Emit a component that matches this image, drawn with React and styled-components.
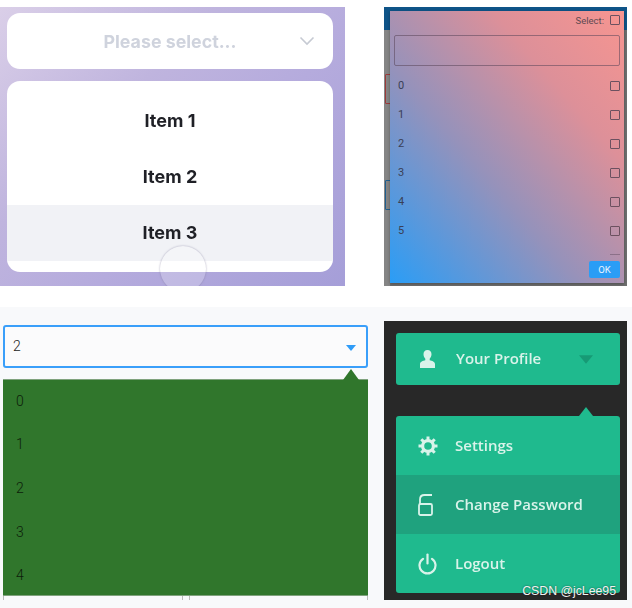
import React from 'react'
import styled, { createGlobalStyle } from 'styled-components'

const GlobalStyle = createGlobalStyle`
  html, body {
    margin: 0;
    padding: 0;
    background: #fff;
  }
  body {
    width: 632px;
    height: 608px;
    overflow: hidden;
    font-family: Inter, 'Liberation Sans', sans-serif;
  }
`

const Row = styled.div`
  display: grid;
  grid-template-columns: 345px 243px;
  column-gap: 39px;
  height: ${(p) => p.$height}px;
  padding-top: ${(p) => p.$top}px;
  box-sizing: border-box;
  background: ${(p) => p.$bg};
`

/* top left */
const Lavender = styled.section`
  height: 279px;
  overflow: hidden;
  position: relative;
  box-sizing: border-box;
  padding: 6px 12px 0 7px;
  background: linear-gradient(135deg, #dacfe8 0%, #bfb4de 35%, #b5abdd 60%, #a59ed8 100%);
`

const SoftSelect = styled.div`
  height: 56px;
  display: flex;
  align-items: center;
  justify-content: center;
  position: relative;
  border-radius: 13px;
  background: #fff;
  color: #cfd3dd;
  font-size: 17.8px;
  font-weight: 700;
  padding-top: 1px;
  box-sizing: border-box;
  filter: blur(0.4px);
  svg {
    position: absolute;
    right: 18px;
    top: 23px;
  }
`

const SoftList = styled.ul`
  list-style: none;
  margin: 12px 0 0;
  padding: 12px 0 11px;
  border-radius: 13px;
  background: #fff;
`

const SoftItem = styled.li`
  height: 56px;
  box-sizing: border-box;
  padding-bottom: 2px;
  display: flex;
  align-items: center;
  justify-content: center;
  color: #1f2026;
  font-size: 18px;
  font-weight: 700;
  background: ${(p) => (p.$active ? '#f1f2f6' : 'transparent')};
  span {
    filter: blur(0.4px);
  }
`

const Touch = styled.div`
  position: absolute;
  left: 160px;
  top: 239px;
  width: 46px;
  height: 46px;
  border-radius: 50%;
  background: rgba(255, 255, 255, 0.22);
  box-shadow: 0 0 2px rgba(120, 115, 150, 0.65);
`

/* top right */
const Backdrop = styled.section`
  height: 279px;
  position: relative;
  overflow: hidden;
  background: linear-gradient(to right, #858585 6px, #6e6e6e 6px);
  &::before {
    content: '';
    display: block;
    height: 23px;
    background: #0e5488;
  }
`

// pieces of the page showing through on the left of the dialog
const BehindBox = styled.div`
  position: absolute;
  left: 1px;
  top: ${(p) => p.$top}px;
  width: 12px;
  height: 28px;
  border: 1px solid ${(p) => p.$color};
  border-radius: 1px;
`

const Dialog = styled.div`
  position: absolute;
  left: 6px;
  top: 4px;
  width: 234px;
  height: 272px;
  box-sizing: border-box;
  padding: 0 4px 0 4px;
  overflow: hidden;
  color: #3a3f55;
  font-family: Roboto, 'Liberation Sans', sans-serif;
  background: linear-gradient(to top right, #2a9df6 0%, #9592bb 40%, #dd9099 72%, #f79590 100%);
  box-shadow: 0 1px 3px rgba(0, 0, 0, 0.3);
`

const DialogHead = styled.div`
  height: 18px;
  display: flex;
  align-items: center;
  justify-content: flex-end;
  gap: 6px;
  font-size: 9.5px;
  color: #5d4a52;
`

const Check = styled.span`
  display: block;
  width: 10px;
  height: 10px;
  box-sizing: border-box;
  border: 1.2px solid #6c5160;
  border-radius: 1px;
`

const SearchBox = styled.div`
  height: 31px;
  box-sizing: border-box;
  margin-top: 6px;
  border: 1px solid rgba(90, 70, 90, 0.55);
  border-radius: 2px;
`

const DialogRow = styled.div`
  height: 29px;
  display: flex;
  align-items: center;
  justify-content: space-between;
  padding-left: 4px;
  font-size: 11px;
`

const DialogList = styled.div`
  margin-top: 5px;
`

const CutOff = styled.div`
  margin: 9px 0 0 auto;
  width: 10px;
  height: 1px;
  background: rgba(100, 80, 100, 0.5);
`

const OkButton = styled.button`
  position: absolute;
  right: 4px;
  bottom: 5px;
  width: 31px;
  height: 17px;
  padding: 0;
  border: 0;
  border-radius: 2px;
  background: #2a9df6;
  color: #e8f4ff;
  font-family: inherit;
  font-size: 9.5px;
  font-weight: 400;
`

/* bottom left */
const PlainSelectColumn = styled.section`
  padding: 18px 0 0 3px;
  font-family: Roboto, 'Liberation Sans', sans-serif;
  font-weight: 300;
  color: #222;
`

const PlainSelect = styled.div`
  width: 365px;
  height: 43px;
  box-sizing: border-box;
  padding: 0 10px 1px 8px;
  display: flex;
  align-items: center;
  justify-content: space-between;
  border: 2px solid #3a9ffa;
  border-radius: 3px;
  background: #fbfbfc;
  font-size: 14px;
  svg {
    margin-top: 3px;
  }
`

const GreenList = styled.ul`
  list-style: none;
  position: relative;
  width: 365px;
  height: 217px;
  box-sizing: border-box;
  margin: 11px 0 0;
  padding: 0 0 0 13px;
  background: #30762c;
  box-shadow: inset 0 1px #7fa27d, inset 0 -1px #7fa27d;
  color: #0d1d0a;
  font-size: 14px;
  &::before {
    content: '';
    position: absolute;
    right: 9px;
    top: -10px;
    border-left: 8px solid transparent;
    border-right: 8px solid transparent;
    border-bottom: 11px solid #30762c;
  }
`

const GreenItem = styled.li`
  height: 43.6px;
  display: flex;
  align-items: center;
`

const Ticks = styled.div`
  width: 365px;
  height: 4px;
  display: grid;
  grid-template-columns: 178px 8px 177px;
  box-sizing: border-box;
  border-left: 1px solid #bbb;
  border-right: 1px solid #bbb;
  span:nth-child(2) {
    border-left: 1px solid #bbb;
    border-right: 1px solid #bbb;
  }
`

/* bottom right */
const DarkPanel = styled.section`
  margin-top: 14px;
  height: 279px;
  box-sizing: border-box;
  padding: 12px 7px 0 12px;
  position: relative;
  background: #282828;
  color: #d9f3ea;
  font-family: 'Open Sans', 'Liberation Sans', sans-serif;
  font-size: 15px;
  font-weight: 600;
`

const ProfileButton = styled.div`
  height: 52px;
  display: flex;
  align-items: center;
  padding-left: 24px;
  border-radius: 3px;
  background: #1fba8e;
  svg:last-child {
    margin-left: 38px;
  }
`

const ProfileLabel = styled.span`
  margin: 0 0 2px 21px;
  filter: blur(0.4px);
`

const Menu = styled.ul`
  list-style: none;
  position: relative;
  margin: 31px 0 0;
  padding: 0;
  border-radius: 3px;
  background: #1fba8e;
  &::before {
    content: '';
    position: absolute;
    right: 27px;
    top: -9px;
    border-left: 7px solid transparent;
    border-right: 7px solid transparent;
    border-bottom: 9px solid #1fba8e;
  }
`

const MenuItem = styled.li`
  height: 59px;
  display: flex;
  align-items: center;
  padding-left: 22px;
  background: ${(p) => (p.$active ? '#1fa27e' : 'transparent')};
  span {
    margin-bottom: 2px;
    filter: blur(0.4px);
  }
`

const IconSlot = styled.div`
  width: 37px;
  display: flex;
  align-items: center;
  svg {
    filter: blur(0.3px);
  }
`

const Watermark = styled.div`
  position: absolute;
  right: 11px;
  bottom: 2px;
  color: #f2f2f2;
  font-family: 'Liberation Sans', sans-serif;
  font-size: 12.3px;
  font-weight: 400;
  text-shadow: 0 0 2px rgba(0, 0, 0, 0.6);
`

const Chevron = () => (
  <svg width='16' height='10' viewBox='0 0 16 10' fill='none' stroke='#c6cad3' strokeWidth='1.6'>
    <path d='M1.5 1.5 8 8l6.5-6.5' />
  </svg>
)

const Caret = ({ w, h, color }) => (
  <svg width={w} height={h} viewBox='0 0 10 6'>
    <path d='M0 0h10L5 6z' fill={color} />
  </svg>
)

const UserIcon = () => (
  <svg width='15' height='18' viewBox='0 0 15 18' fill='#d9f3ea'>
    <path d='M7.5 0c2.6 0 4 1.9 4 4.3 0 1.8-.8 3.4-1.8 4.4v1.6c2.3.6 5.3 1.5 5.3 3.7V18H0v-4c0-2.2 3-3.1 5.3-3.7V8.700C4.300 7.700 3.500 6.100 3.500 4.300 3.500 1.900 4.900 0 7.500 0z' />
  </svg>
)

const GearIcon = () => (
  <svg width='20' height='20' viewBox='0 0 20 20' fill='none' stroke='#d9f3ea'>
    <circle cx='10' cy='10' r='5.4' strokeWidth='3.2' />
    {[0, 45, 90, 135, 180, 225, 270, 315].map((deg) => (
      <path key={deg} d='M10 0.500v4' strokeWidth='3' transform={`rotate(${deg} 10 10)`} />
    ))}
  </svg>
)

const LockIcon = () => (
  <svg width='15' height='22' viewBox='0 0 15 22' fill='none' stroke='#d9f3ea' strokeWidth='1.8'>
    <path d='M2 10V5.500C2 2.800 3.800 1 6.500 1H14' />
    <rect x='1' y='10' width='13' height='11' rx='1.500' />
  </svg>
)

const PowerIcon = () => (
  <svg width='19' height='22' viewBox='0 0 19 22' fill='none' stroke='#d9f3ea' strokeWidth='2.200' strokeLinecap='round'>
    <path d='M9.500 1.500v9' />
    <path d='M5 5.800a8 8 0 1 0 9 0' />
  </svg>
)

const App = () => {
  return (
    <>
      <GlobalStyle />
      <Row $height={307} $top={7} $bg='#fff'>
        <Lavender>
          <SoftSelect>
            Please select...
            <Chevron />
          </SoftSelect>
          <SoftList>
            <SoftItem><span>Item 1</span></SoftItem>
            <SoftItem><span>Item 2</span></SoftItem>
            <SoftItem $active><span>Item 3</span></SoftItem>
          </SoftList>
          <Touch />
        </Lavender>
        <Backdrop>
          <BehindBox $top={67} $color='#9c3a3a' />
          <BehindBox $top={173} $color='#1f5f8f' />
          <Dialog>
            <DialogHead>
              Select:
              <Check />
            </DialogHead>
            <SearchBox />
            <DialogList>
              {[0, 1, 2, 3, 4, 5].map((n) => (
                <DialogRow key={n}>
                  {n}
                  <Check />
                </DialogRow>
              ))}
            </DialogList>
            <CutOff />
            <OkButton>OK</OkButton>
          </Dialog>
        </Backdrop>
      </Row>
      <Row $height={301} $top={0} $bg='#f8f9fb'>
        <PlainSelectColumn>
          <PlainSelect>
            2
            <Caret w={10} h={6} color='#2f9cf8' />
          </PlainSelect>
          <GreenList>
            {[0, 1, 2, 3, 4].map((n) => (
              <GreenItem key={n}>{n}</GreenItem>
            ))}
          </GreenList>
          <Ticks>
            <span />
            <span />
            <span />
          </Ticks>
        </PlainSelectColumn>
        <DarkPanel>
          <ProfileButton>
            <UserIcon />
            <ProfileLabel>Your Profile</ProfileLabel>
            <Caret w={14} h={9} color='#179a75' />
          </ProfileButton>
          <Menu>
            <MenuItem>
              <IconSlot><GearIcon /></IconSlot>
              <span>Settings</span>
            </MenuItem>
            <MenuItem $active>
              <IconSlot><LockIcon /></IconSlot>
              <span>Change Password</span>
            </MenuItem>
            <MenuItem>
              <IconSlot><PowerIcon /></IconSlot>
              <span>Logout</span>
            </MenuItem>
          </Menu>
          <Watermark>CSDN @jcLee95</Watermark>
        </DarkPanel>
      </Row>
    </>
  )
}

export default App
